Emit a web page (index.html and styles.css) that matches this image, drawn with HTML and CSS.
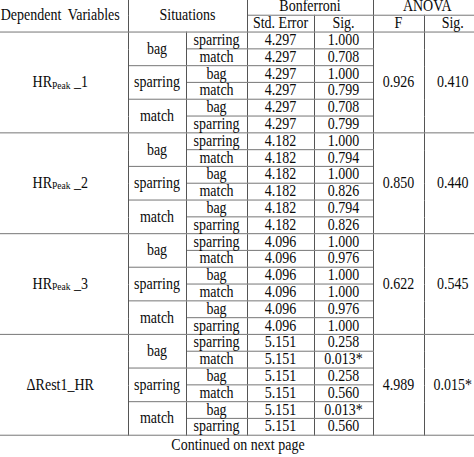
FILE: index.html
```html
<!DOCTYPE html>
<html>
<head>
<meta charset="utf-8">
<link rel="stylesheet" href="styles.css">
</head>
<body>
<div class="page">
  <div class="sheet">
  <table class="stats">
    <colgroup>
      <col class="c-dep"><col class="c-sit"><col class="c-sub"><col class="c-se"><col class="c-sig"><col class="c-f"><col class="c-asig">
    </colgroup>
    <thead>
      <tr class="h1">
        <th rowspan="2" class="dep"><span class="spaced">Dependent Variables</span></th>
        <th rowspan="2" colspan="2">Situations</th>
        <th colspan="2">Bonferroni</th>
        <th colspan="2" class="last">ANOVA</th>
      </tr>
      <tr class="h2">
        <th>Std. Error</th><th>Sig.</th><th>F</th><th class="last">Sig.</th>
      </tr>
    </thead>
    <tbody>
      <tr><td rowspan="6" class="dep">HR<span class="sub">Peak</span> _1</td><td rowspan="2">bag</td><td>sparring</td><td>4.297</td><td>1.000</td><td rowspan="6">0.926</td><td rowspan="6" class="last">0.410</td></tr>
      <tr><td>match</td><td>4.297</td><td>0.708</td></tr>
      <tr><td rowspan="2">sparring</td><td>bag</td><td>4.297</td><td>1.000</td></tr>
      <tr><td>match</td><td>4.297</td><td>0.799</td></tr>
      <tr><td rowspan="2">match</td><td>bag</td><td>4.297</td><td>0.708</td></tr>
      <tr><td>sparring</td><td>4.297</td><td>0.799</td></tr>

      <tr><td rowspan="6" class="dep">HR<span class="sub">Peak</span> _2</td><td rowspan="2">bag</td><td>sparring</td><td>4.182</td><td>1.000</td><td rowspan="6">0.850</td><td rowspan="6" class="last">0.440</td></tr>
      <tr><td>match</td><td>4.182</td><td>0.794</td></tr>
      <tr><td rowspan="2">sparring</td><td>bag</td><td>4.182</td><td>1.000</td></tr>
      <tr><td>match</td><td>4.182</td><td>0.826</td></tr>
      <tr><td rowspan="2">match</td><td>bag</td><td>4.182</td><td>0.794</td></tr>
      <tr><td>sparring</td><td>4.182</td><td>0.826</td></tr>

      <tr><td rowspan="6" class="dep">HR<span class="sub">Peak</span> _3</td><td rowspan="2">bag</td><td>sparring</td><td>4.096</td><td>1.000</td><td rowspan="6">0.622</td><td rowspan="6" class="last">0.545</td></tr>
      <tr><td>match</td><td>4.096</td><td>0.976</td></tr>
      <tr><td rowspan="2">sparring</td><td>bag</td><td>4.096</td><td>1.000</td></tr>
      <tr><td>match</td><td>4.096</td><td>1.000</td></tr>
      <tr><td rowspan="2">match</td><td>bag</td><td>4.096</td><td>0.976</td></tr>
      <tr><td>sparring</td><td>4.096</td><td>1.000</td></tr>

      <tr><td rowspan="6" class="dep">ΔRest1_HR</td><td rowspan="2">bag</td><td>sparring</td><td>5.151</td><td>0.258</td><td rowspan="6">4.989</td><td rowspan="6" class="last">0.015*</td></tr>
      <tr><td>match</td><td>5.151</td><td>0.013*</td></tr>
      <tr><td rowspan="2">sparring</td><td>bag</td><td>5.151</td><td>0.258</td></tr>
      <tr><td>match</td><td>5.151</td><td>0.560</td></tr>
      <tr><td rowspan="2">match</td><td>bag</td><td>5.151</td><td>0.013*</td></tr>
      <tr><td>sparring</td><td>5.151</td><td>0.560</td></tr>
    </tbody>
  </table>
  <div class="cont">Continued on next page</div>
  </div>
</div>
</body>
</html>
```

FILE: styles.css
```css
html, body {
  margin: 0;
  padding: 0;
  background: #ffffff;
}

.page {
  width: 474px;
  height: 457px;
  overflow: hidden;
  font-family: "Liberation Serif", "Times New Roman", serif;
  font-size: 14px;
  color: #0a0a0a;
}

/* the source scan is slightly stretched vertically */
.sheet {
  transform: scaleY(1.12);
  transform-origin: 0 0;
}

.stats {
  border-collapse: collapse;
  table-layout: fixed;
  width: 488px;
  margin-left: -7px;
  margin-top: -1px;
}

.c-dep { width: 135px; }
.c-sit { width: 58px; }
.c-sub { width: 61px; }
.c-se { width: 67px; }
.c-sig { width: 59px; }
.c-f { width: 51px; }
.c-asig { width: 57px; }

.stats th,
.stats td {
  padding: 0;
  text-align: center;
  vertical-align: middle;
  font-weight: normal;
  line-height: 14px;
  white-space: nowrap;
  border-top: 1px solid #858585;
  border-bottom: 1px solid #858585;
  border-left: 1px solid #555555;
  border-right: 1px solid #555555;
}

.stats thead tr.h1 th {
  border-top: none;
}

.stats .dep {
  border-left: none;
}

.stats .last {
  border-right: none;
}

.stats tr.h1 { height: 13.5px; }
.stats tr.h2 { height: 13.1px; }
.stats tbody tr { height: 15px; }

.spaced {
  word-spacing: 3px;
}

.sub {
  font-size: 9.5px;
  vertical-align: -1px;
  line-height: 0;
}

.cont {
  text-align: center;
  line-height: 14px;
  margin-top: 2px;
  padding-left: 2px;
}
```
